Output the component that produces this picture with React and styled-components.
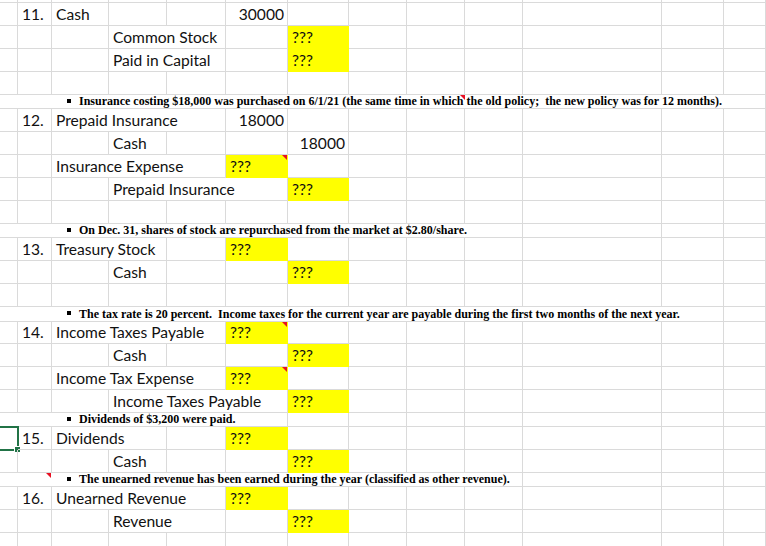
import React from 'react'
import styled, { createGlobalStyle } from 'styled-components'

const COLS = [18, 34, 57, 58, 59, 62, 61, 58, 58, 58, 139, 62, 42]

const GlobalStyle = createGlobalStyle`
  html, body {
    margin: 0;
    padding: 0;
    background: #ffffff;
  }
  body {
    width: 766px;
    height: 546px;
    overflow: hidden;
  }
`

const Sheet = styled.div`
  width: 766px;
  height: 546px;
  overflow: hidden;
  background: #fff;
  font-family: Lato, "Liberation Sans", sans-serif;
  color: #111;
`

const Row = styled.div`
  display: grid;
  grid-template-columns: ${COLS.map((c) => c + 'px').join(' ')};
  height: ${(p) => p.$h || 23}px;
`

const Cell = styled.div`
  position: relative;
  box-sizing: border-box;
  grid-column: span ${(p) => p.$span || 1};
  border-right: 1px solid ${(p) => (p.$fill ? p.$fill : '#dadada')};
  border-bottom: 1px solid ${(p) => (p.$fill ? p.$fill : '#dadada')};
  background: ${(p) => p.$fill || 'transparent'};
  display: flex;
  align-items: flex-end;
  justify-content: ${(p) => (p.$right ? 'flex-end' : 'flex-start')};
  padding: 0 ${(p) => (p.$right ? 3 : 0)}px 1px ${(p) => (p.$right ? 0 : 4)}px;
  font-size: 15.6px;
  line-height: 19px;
  white-space: nowrap;
  overflow: visible;
`

const Note = styled(Cell)`
  font-family: "Liberation Serif", "DejaVu Serif", serif;
  font-weight: bold;
  font-size: 12px;
  line-height: 13px;
  padding: 0 0 0 66px;
  align-items: center;
  color: #000;
`

const Bullet = styled.span`
  display: inline-block;
  width: 4px;
  height: 4px;
  background: #000;
  margin: 0 8px 0 1px;
  vertical-align: middle;
  position: relative;
  top: -1px;
`

const Flag = styled.span`
  position: absolute;
  top: 0;
  left: ${(p) => (p.$left != null ? p.$left + 'px' : 'auto')};
  right: ${(p) => (p.$left != null ? 'auto' : '0')};
  width: 0;
  height: 0;
  border-top: 5px solid #e81123;
  border-left: 5px solid transparent;
`

const Selection = styled.div`
  position: absolute;
  left: -3px;
  top: -1px;
  right: -2px;
  bottom: -2px;
  border: 2px solid #217346;
  pointer-events: none;
`

const Handle = styled.span`
  position: absolute;
  right: -4px;
  bottom: -4px;
  width: 5px;
  height: 5px;
  background: #217346;
  border: 1px solid #fff;
`

const YELLOW = '#ffff00'

function Blanks({ n }) {
  return Array.from({ length: n }, (_, i) => <Cell key={i} />)
}

function Q({ flag }) {
  return (
    <Cell $fill={YELLOW}>
      ???
      {flag && <Flag />}
    </Cell>
  )
}

function NoteRow({ span, h = 14, children, flags = [] }) {
  return (
    <Row $h={h}>
      <Note $span={span}>
        <Bullet />
        {children}
        {flags.map((f) => (
          <Flag key={f} $left={f} />
        ))}
      </Note>
      <Blanks n={13 - span} />
    </Row>
  )
}

export default function App() {
  return (
    <Sheet>
      <GlobalStyle />
      <Row $h={3}>
        <Blanks n={13} />
      </Row>

      {/* 11 */}
      <Row>
        <Cell />
        <Cell>11.</Cell>
        <Cell>Cash</Cell>
        <Cell />
        <Cell />
        <Cell $right>30000</Cell>
        <Blanks n={7} />
      </Row>
      <Row>
        <Blanks n={3} />
        <Cell $span={2}>Common Stock</Cell>
        <Cell />
        <Q />
        <Blanks n={6} />
      </Row>
      <Row>
        <Blanks n={3} />
        <Cell $span={2}>Paid in Capital</Cell>
        <Cell />
        <Q />
        <Blanks n={6} />
      </Row>
      <Row>
        <Blanks n={13} />
      </Row>

      <NoteRow span={13} flags={[460]}>
        Insurance costing $18,000 was purchased on 6/1/21 (the same time in which the old policy;&nbsp; the new policy was for 12 months).
      </NoteRow>

      {/* 12 */}
      <Row>
        <Cell />
        <Cell>12.</Cell>
        <Cell $span={3}>Prepaid Insurance</Cell>
        <Cell $right>18000</Cell>
        <Blanks n={7} />
      </Row>
      <Row>
        <Blanks n={3} />
        <Cell>Cash</Cell>
        <Cell />
        <Cell />
        <Cell $right>18000</Cell>
        <Blanks n={6} />
      </Row>
      <Row>
        <Blanks n={2} />
        <Cell $span={3}>Insurance Expense</Cell>
        <Q flag />
        <Blanks n={7} />
      </Row>
      <Row>
        <Blanks n={3} />
        <Cell $span={3}>Prepaid Insurance</Cell>
        <Q />
        <Blanks n={6} />
      </Row>
      <Row>
        <Blanks n={13} />
      </Row>

      <NoteRow span={10}>
        On Dec. 31, shares of stock are repurchased from the market at $2.80/share.
      </NoteRow>

      {/* 13 */}
      <Row>
        <Cell />
        <Cell>13.</Cell>
        <Cell $span={2}>Treasury Stock</Cell>
        <Cell />
        <Q />
        <Blanks n={7} />
      </Row>
      <Row>
        <Blanks n={3} />
        <Cell>Cash</Cell>
        <Cell />
        <Cell />
        <Q />
        <Blanks n={6} />
      </Row>
      <Row>
        <Blanks n={13} />
      </Row>

      <NoteRow span={12} h={15}>
        The tax rate is 20 percent.&nbsp; Income taxes for the current year are payable during the first two months of the next year.
      </NoteRow>

      {/* 14 */}
      <Row $h={22}>
        <Cell />
        <Cell>14.</Cell>
        <Cell $span={3}>Income Taxes Payable</Cell>
        <Q flag />
        <Blanks n={7} />
      </Row>
      <Row>
        <Blanks n={3} />
        <Cell>Cash</Cell>
        <Cell />
        <Cell />
        <Q />
        <Blanks n={6} />
      </Row>
      <Row>
        <Blanks n={2} />
        <Cell $span={3}>Income Tax Expense</Cell>
        <Q flag />
        <Blanks n={7} />
      </Row>
      <Row>
        <Blanks n={3} />
        <Cell $span={3}>Income Taxes Payable</Cell>
        <Q />
        <Blanks n={6} />
      </Row>

      <NoteRow span={6}>Dividends of $3,200 were paid.</NoteRow>

      {/* 15 */}
      <Row>
        <Cell>
          <Selection>
            <Handle />
          </Selection>
        </Cell>
        <Cell>15.</Cell>
        <Cell $span={2}>Dividends</Cell>
        <Cell />
        <Q />
        <Blanks n={7} />
      </Row>
      <Row>
        <Blanks n={3} />
        <Cell>Cash</Cell>
        <Cell />
        <Cell />
        <Q />
        <Blanks n={6} />
      </Row>

      <NoteRow span={10} flags={[46]}>
        The unearned revenue has been earned during the year (classified as other revenue).
      </NoteRow>

      {/* 16 */}
      <Row>
        <Cell />
        <Cell>16.</Cell>
        <Cell $span={3}>Unearned Revenue</Cell>
        <Q />
        <Blanks n={7} />
      </Row>
      <Row>
        <Blanks n={3} />
        <Cell $span={2}>Revenue</Cell>
        <Cell />
        <Q />
        <Blanks n={6} />
      </Row>
      <Row>
        <Blanks n={13} />
      </Row>
    </Sheet>
  )
}
